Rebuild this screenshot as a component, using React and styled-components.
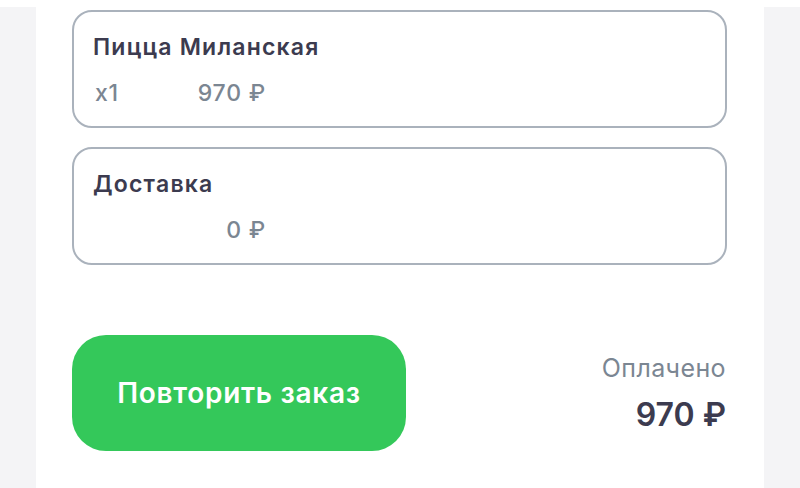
import styled, { createGlobalStyle } from 'styled-components'

const Global = createGlobalStyle`
  html, body {
    margin: 0;
    padding: 0;
    background: #ffffff;
    font-family: Inter, "Noto Sans", sans-serif;
    -webkit-font-smoothing: antialiased;
  }
`

const Page = styled.div`
  margin-top: 7px;
  height: 481px;
  background: #f4f4f6;
  padding: 0 36px;
  box-sizing: border-box;
`

const Panel = styled.div`
  height: 100%;
  background: #ffffff;
  padding: 3px 37px 0 36px;
  box-sizing: border-box;
  display: flex;
  flex-direction: column;
`

const List = styled.div`
  display: flex;
  flex-direction: column;
  gap: 19px;
`

const Card = styled.div`
  height: 118px;
  box-sizing: border-box;
  border: 2px solid #aab2bc;
  border-radius: 20px;
  padding: 22px 19px 0;
  display: flex;
  flex-direction: column;
  gap: 20px;
`

const Title = styled.div`
  font-size: 23px;
  font-weight: 600;
  letter-spacing: 1.2px;
  color: #3c3b4f;
  line-height: 26px;
`

const Row = styled.div`
  display: flex;
  font-size: 23px;
  font-weight: 500;
  letter-spacing: 0.8px;
  color: #7b8692;
  line-height: 26px;
`

const Qty = styled.span`
  width: 60px;
  padding-left: 2px;
`

const Price = styled.span`
  width: 111px;
  text-align: right;
`

const Footer = styled.div`
  margin-top: 70px;
  display: flex;
  align-items: center;
  justify-content: space-between;
`

const Button = styled.button`
  width: 334px;
  height: 116px;
  border: none;
  border-radius: 34px;
  background: #34c85a;
  color: #ffffff;
  font-family: inherit;
  font-size: 28px;
  font-weight: 600;
  letter-spacing: 0.7px;
  cursor: pointer;
`

const Summary = styled.div`
  display: flex;
  flex-direction: column;
  align-items: flex-end;
  gap: 14px;
  padding-right: 1px;
`

const Label = styled.div`
  font-size: 25px;
  letter-spacing: 0.4px;
  color: #7b8692;
  line-height: 30px;
`

const Total = styled.div`
  font-size: 32px;
  font-weight: 600;
  color: #3c3b4f;
  line-height: 36px;
`

const items = [
  { name: 'Пицца Миланская', qty: 'x1', price: '970 ₽' },
  { name: 'Доставка', qty: '', price: '0 ₽' },
]

export default function App() {
  return (
    <>
      <Global />
      <Page>
        <Panel>
          <List>
            {items.map((it) => (
              <Card key={it.name}>
                <Title>{it.name}</Title>
                <Row>
                  <Qty>{it.qty}</Qty>
                  <Price>{it.price}</Price>
                </Row>
              </Card>
            ))}
          </List>
          <Footer>
            <Button>Повторить заказ</Button>
            <Summary>
              <Label>Оплачено</Label>
              <Total>970 ₽</Total>
            </Summary>
          </Footer>
        </Panel>
      </Page>
    </>
  )
}
